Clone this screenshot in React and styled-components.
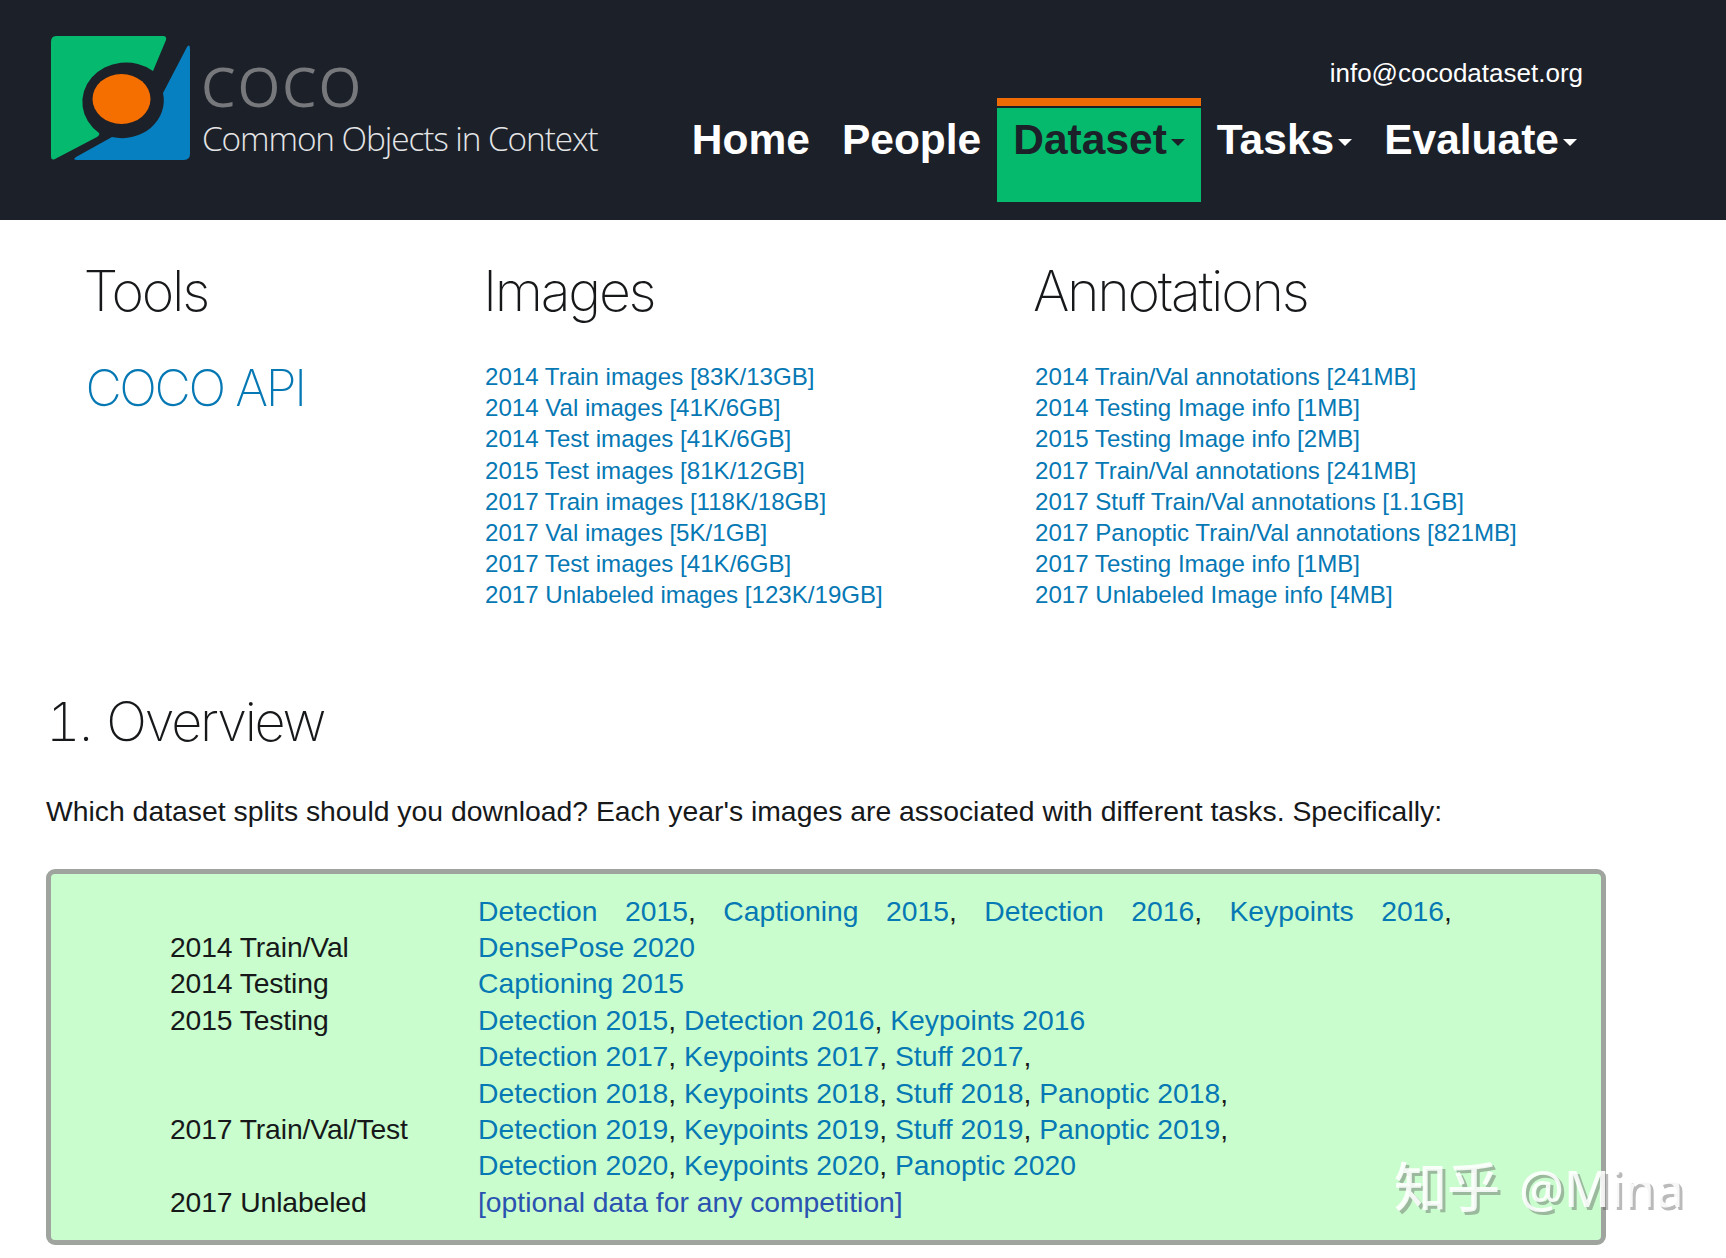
import React from "react";
import styled, { createGlobalStyle } from "styled-components";

const Global = createGlobalStyle`
  html, body { margin: 0; padding: 0; background: #fff; }
  body { font-family: "Liberation Sans", Arial, sans-serif; color: #16181a; overflow: hidden; }
  a { text-decoration: none; }
`;

const Page = styled.div`
  position: relative;
  width: 1726px;
  height: 1258px;
  overflow: hidden;
`;

const Header = styled.header`
  height: 220px;
  background: #1c2029;
  display: flex;
  justify-content: space-between;
  padding: 36px 143px 0 50px;
  box-sizing: border-box;
`;

const Brand = styled.div`
  display: flex;
  gap: 11px;
  align-items: flex-start;
`;

const BrandText = styled.div`
  display: flex;
  flex-direction: column;
  font-family: "Open Sans", sans-serif;
  font-weight: 300;
  padding-top: 20px;
`;

const BrandName = styled.div`
  font-size: 55px;
  line-height: 59px;
  letter-spacing: 1.8px;
  color: #76787b;
  font-weight: 400;
`;

const BrandTagline = styled.div`
  font-size: 33.4px;
  line-height: 47px;
  letter-spacing: -1.1px;
  margin-left: 1px;
  color: #e4e5e6;
`;

const NavSide = styled.div`
  display: flex;
  flex-direction: column;
  align-items: flex-end;
`;

const Email = styled.a`
  font-size: 26px;
  line-height: 30px;
  color: #fff;
  margin-top: 22px;
  height: 40px;
`;

const Nav = styled.nav`
  display: flex;
  margin-right: -10px;
`;

const NavItem = styled.a`
  display: flex;
  flex-direction: column;
  height: 104px;
  color: ${p => (p.$active ? "#1c2029" : "#fff")};
  font-size: 42.5px;
  font-weight: 700;
`;

const NavBar = styled.div`
  height: 8px;
  flex: none;
  margin-bottom: 2px;
  background: ${p => (p.$active ? "#ee6a05" : "transparent")};
`;

const NavBody = styled.div`
  flex: 1;
  display: flex;
  align-items: flex-start;
  padding: 0 16px;
  line-height: 63px;
  background: ${p => (p.$active ? "#05ba6c" : "transparent")};
`;

const Caret = styled.span`
  width: 0;
  height: 0;
  border-left: 7px solid transparent;
  border-right: 7px solid transparent;
  border-top: 7px solid currentColor;
  margin: 31px 0 0 4px;
`;

const Downloads = styled.section`
  display: grid;
  grid-template-columns: 399.5px 550px 1fr;
  padding: 0 0 0 85.5px;
  margin-top: 38px;
`;

const Column = styled.div`
  display: flex;
  flex-direction: column;
`;

const ColumnTitle = styled.h2`
  margin: 0 0 38px -2px;
  font-family: Inter, sans-serif;
  font-weight: 200;
  font-size: 55.5px;
  line-height: 65px;
  letter-spacing: -2.3px;
  color: #16181a;
`;

const ApiLink = styled.a`
  font-family: Inter, sans-serif;
  font-weight: 200;
  font-size: 50px;
  line-height: 60px;
  letter-spacing: -2.4px;
  color: #0678b4;
  margin: -3px 0 0 0;
`;

const FileLink = styled.a`
  display: block;
  font-size: 24.1px;
  line-height: 31.2px;
  color: #0678b4;
`;

const Overview = styled.h1`
  margin: 76px 0 0 46px;
  font-family: Inter, sans-serif;
  font-weight: 200;
  font-size: 54px;
  line-height: 70px;
  letter-spacing: -2.2px;
  word-spacing: 3px;
  font-variant-numeric: tabular-nums;
  color: #16181a;
`;

const Lead = styled.p`
  margin: 36px 0 0 46px;
  font-size: 28.35px;
  line-height: 36px;
  color: #16181a;
`;

const SplitBox = styled.div`
  margin: 40px 0 0 46px;
  width: 1560px;
  height: 376px;
  box-sizing: border-box;
  border: 5px solid #9fa49f;
  border-radius: 9px;
  background: #c9fdcd;
  padding: 19px 0 0 119px;
  font-size: 28.3px;
  line-height: 36.4px;
`;

const SplitRow = styled.div`
  display: grid;
  grid-template-columns: 308px 974px;
  align-items: end;
`;

const SplitLabel = styled.div`
  color: #16181a;
  letter-spacing: -0.12px;
`;

const SplitLinks = styled.div`
  text-align: justify;
  color: #16181a;
`;

const TaskLink = styled.a`
  white-space: nowrap;
  color: ${p => (p.$muted ? "#2a52b0" : "#0678b4")};
`;

const Watermark = styled.div`
  position: absolute;
  left: 1394px;
  top: 1152px;
  font-family: "Noto Sans", "Noto Sans CJK SC", sans-serif;
  font-size: 50px;
  font-weight: 500;
  line-height: 70px;
  white-space: nowrap;
  color: rgba(255, 255, 255, 0.88);
  text-shadow: 3px 3px 0 rgba(90, 90, 90, 0.42);
`;

const WatermarkCjk = styled.span`
  font-size: 53px;
  margin-right: 6px;
`;

const Logo = () => (
  <svg width="140" height="125" viewBox="0 0 140 125" style={{ flex: "none" }}>
    <path
      d="M6 0H113Q117 0 116 4L103 35A41.7 37.7 0 1 0 49 97Q50 99 47 101L5 123Q1 125 1 120V6Q1 0 6 0Z"
      fill="#05b96f"
    />
    <path
      d="M137 11Q140 7 140 14V118Q140 124 133 124H27Q22 124 26 121L62 101A41.7 37.7 0 0 0 113 57Z"
      fill="#0680c0"
    />
    <ellipse cx="71.5" cy="63" rx="29" ry="25" fill="#f56e00" />
  </svg>
);

const navItems = [
  { label: "Home", href: "#home" },
  { label: "People", href: "#people" },
  { label: "Dataset", href: "#dataset", caret: true, active: true },
  { label: "Tasks", href: "#tasks", caret: true },
  { label: "Evaluate", href: "#evaluate", caret: true },
];

const images = [
  "2014 Train images [83K/13GB]",
  "2014 Val images [41K/6GB]",
  "2014 Test images [41K/6GB]",
  "2015 Test images [81K/12GB]",
  "2017 Train images [118K/18GB]",
  "2017 Val images [5K/1GB]",
  "2017 Test images [41K/6GB]",
  "2017 Unlabeled images [123K/19GB]",
];

const annotations = [
  "2014 Train/Val annotations [241MB]",
  "2014 Testing Image info [1MB]",
  "2015 Testing Image info [2MB]",
  "2017 Train/Val annotations [241MB]",
  "2017 Stuff Train/Val annotations [1.1GB]",
  "2017 Panoptic Train/Val annotations [821MB]",
  "2017 Testing Image info [1MB]",
  "2017 Unlabeled Image info [4MB]",
];

const splits = [
  { label: "2014 Train/Val", tasks: ["Detection 2015", "Captioning 2015", "Detection 2016", "Keypoints 2016", "DensePose 2020"] },
  { label: "2014 Testing", tasks: ["Captioning 2015"] },
  { label: "2015 Testing", tasks: ["Detection 2015", "Detection 2016", "Keypoints 2016"] },
  { label: "", tasks: ["Detection 2017", "Keypoints 2017", "Stuff 2017"], trailing: true },
  { label: "", tasks: ["Detection 2018", "Keypoints 2018", "Stuff 2018", "Panoptic 2018"], trailing: true },
  { label: "2017 Train/Val/Test", tasks: ["Detection 2019", "Keypoints 2019", "Stuff 2019", "Panoptic 2019"], trailing: true },
  { label: "", tasks: ["Detection 2020", "Keypoints 2020", "Panoptic 2020"] },
  { label: "2017 Unlabeled", tasks: ["[optional data for any competition]"], muted: true },
];

export default function App() {
  return (
    <Page>
      <Global />
      <Header>
        <Brand>
          <Logo />
          <BrandText>
            <BrandName>COCO</BrandName>
            <BrandTagline>Common Objects in Context</BrandTagline>
          </BrandText>
        </Brand>
        <NavSide>
          <Email href="#mail">info@cocodataset.org</Email>
          <Nav>
            {navItems.map(item => (
              <NavItem key={item.label} href={item.href} $active={item.active}>
                <NavBar $active={item.active} />
                <NavBody $active={item.active}>
                  {item.label}
                  {item.caret && <Caret />}
                </NavBody>
              </NavItem>
            ))}
          </Nav>
        </NavSide>
      </Header>

      <Downloads>
        <Column>
          <ColumnTitle>Tools</ColumnTitle>
          <ApiLink href="#api">COCO API</ApiLink>
        </Column>
        <Column>
          <ColumnTitle>Images</ColumnTitle>
          {images.map(t => <FileLink key={t} href="#file">{t}</FileLink>)}
        </Column>
        <Column>
          <ColumnTitle>Annotations</ColumnTitle>
          {annotations.map(t => <FileLink key={t} href="#file">{t}</FileLink>)}
        </Column>
      </Downloads>

      <Overview>1. Overview</Overview>
      <Lead>Which dataset splits should you download? Each year's images are associated with different tasks. Specifically:</Lead>

      <SplitBox>
        {splits.map((row, i) => (
          <SplitRow key={i}>
            <SplitLabel>{row.label}</SplitLabel>
            <SplitLinks>
              {row.tasks.map((task, j) => (
                <React.Fragment key={task}>
                  <TaskLink href="#task" $muted={row.muted}>{task}</TaskLink>
                  {(j < row.tasks.length - 1 || row.trailing) && ","}{" "}
                </React.Fragment>
              ))}
            </SplitLinks>
          </SplitRow>
        ))}
      </SplitBox>

      <Watermark><WatermarkCjk>知乎</WatermarkCjk> @Mina</Watermark>
    </Page>
  );
}
